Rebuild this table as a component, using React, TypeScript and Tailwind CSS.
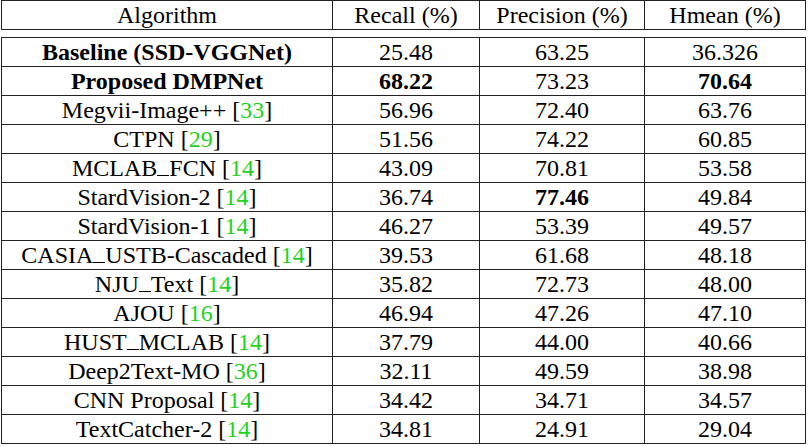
import React from 'react';

type Row = {
  name: string;
  cite?: string;
  recall: string;
  precision: string;
  hmean: string;
  bold?: boolean;
  boldCols?: string[];
};

const rows: Row[] = [
  { name: 'Baseline (SSD-VGGNet)', recall: '25.48', precision: '63.25', hmean: '36.326', bold: true },
  { name: 'Proposed DMPNet', recall: '68.22', precision: '73.23', hmean: '70.64', bold: true, boldCols: ['recall', 'hmean'] },
  { name: 'Megvii-Image++', cite: '33', recall: '56.96', precision: '72.40', hmean: '63.76' },
  { name: 'CTPN', cite: '29', recall: '51.56', precision: '74.22', hmean: '60.85' },
  { name: 'MCLAB_FCN', cite: '14', recall: '43.09', precision: '70.81', hmean: '53.58' },
  { name: 'StardVision-2', cite: '14', recall: '36.74', precision: '77.46', hmean: '49.84', boldCols: ['precision'] },
  { name: 'StardVision-1', cite: '14', recall: '46.27', precision: '53.39', hmean: '49.57' },
  { name: 'CASIA_USTB-Cascaded', cite: '14', recall: '39.53', precision: '61.68', hmean: '48.18' },
  { name: 'NJU_Text', cite: '14', recall: '35.82', precision: '72.73', hmean: '48.00' },
  { name: 'AJOU', cite: '16', recall: '46.94', precision: '47.26', hmean: '47.10' },
  { name: 'HUST_MCLAB', cite: '14', recall: '37.79', precision: '44.00', hmean: '40.66' },
  { name: 'Deep2Text-MO', cite: '36', recall: '32.11', precision: '49.59', hmean: '38.98' },
  { name: 'CNN Proposal', cite: '14', recall: '34.42', precision: '34.71', hmean: '34.57' },
  { name: 'TextCatcher-2', cite: '14', recall: '34.81', precision: '24.91', hmean: '29.04' },
];

const cell =
  'flex items-center justify-center border-r border-b border-[#222] h-[29px] text-[24px] leading-none text-black whitespace-nowrap';

const cols = 'grid grid-cols-[331px_147px_165px_161px] w-max border-l border-t border-[#222]';

// LaTeX-style \_ : a short bar sitting on the baseline
const Name = ({ text }: { text: string }) => {
  const parts = text.split('_');
  return (
    <>
      {parts.map((p, i) => (
        <React.Fragment key={i}>
          {i > 0 && <span className="inline-block w-[12px] h-[1.5px] bg-black align-baseline" />}
          {p}
        </React.Fragment>
      ))}
    </>
  );
};

export default function App() {
  return (
    <div className="w-[811px] h-[446px] bg-white overflow-hidden" style={{ fontFamily: '"Liberation Serif", "Times New Roman", serif' }}>
      <div className="ml-[1px]">
        <div className={cols}>
          <div className={cell}>Algorithm</div>
          <div className={cell}>Recall (%)</div>
          <div className={cell}>Precision (%)</div>
          <div className={cell}>Hmean (%)</div>
        </div>

        <div className={`${cols} mt-[7px]`}>
          {rows.map((r) => {
            const b = (k: string) => (r.boldCols?.includes(k) ? 'font-bold' : '');
            return (
              <React.Fragment key={r.name}>
                <div className={`${cell} ${r.bold ? 'font-bold' : ''}`}>
                  <span>
                    <Name text={r.name} />
                    {r.cite && (
                      <span className="ml-[6px]">
                        [<span className="text-[#1ed21e]">{r.cite}</span>]
                      </span>
                    )}
                  </span>
                </div>
                <div className={`${cell} ${b('recall')}`}>{r.recall}</div>
                <div className={`${cell} ${b('precision')}`}>{r.precision}</div>
                <div className={`${cell} ${b('hmean')}`}>{r.hmean}</div>
              </React.Fragment>
            );
          })}
        </div>
      </div>
    </div>
  );
}
